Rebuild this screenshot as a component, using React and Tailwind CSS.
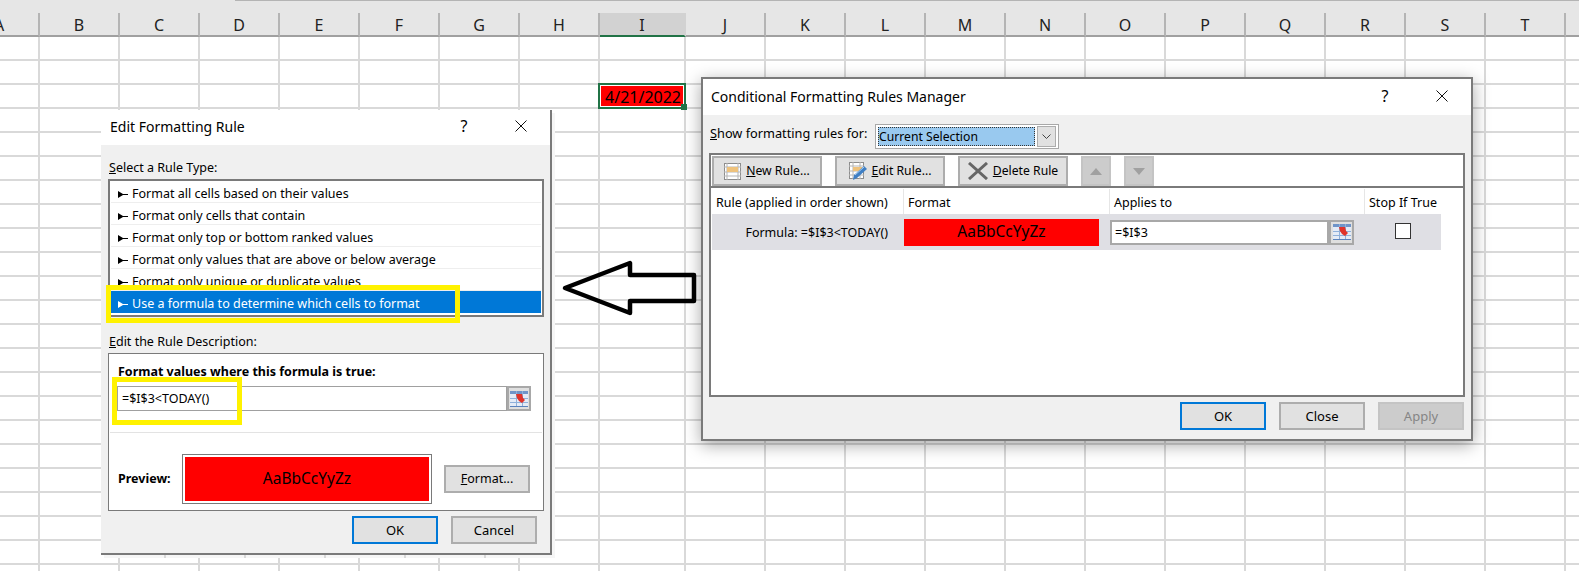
import React from 'react';

const font = { fontFamily: '"Noto Sans", sans-serif' };

const columns = [
    { name: 'A', w: 'w-[40px]', clip: true },
    { name: 'B', w: 'w-[80px]' }, { name: 'C', w: 'w-[80px]' }, { name: 'D', w: 'w-[80px]' },
    { name: 'E', w: 'w-[80px]' }, { name: 'F', w: 'w-[80px]' }, { name: 'G', w: 'w-[80px]' },
    { name: 'H', w: 'w-[80px]' }, { name: 'I', w: 'w-[86px]', active: true },
    { name: 'J', w: 'w-[80px]' }, { name: 'K', w: 'w-[80px]' }, { name: 'L', w: 'w-[80px]' },
    { name: 'M', w: 'w-[80px]' }, { name: 'N', w: 'w-[80px]' }, { name: 'O', w: 'w-[80px]' },
    { name: 'P', w: 'w-[80px]' }, { name: 'Q', w: 'w-[80px]' }, { name: 'R', w: 'w-[80px]' },
    { name: 'S', w: 'w-[80px]' }, { name: 'T', w: 'w-[80px]' }, { name: '', w: 'w-[80px]' },
];

const ruleTypes = [
    'Format all cells based on their values',
    'Format only cells that contain',
    'Format only top or bottom ranked values',
    'Format only values that are above or below average',
    'Format only unique or duplicate values',
];

const buttonTones = {
    normal: 'bg-[#e1e1e1] border-[#adadad] text-black',
    focused: 'bg-[#e1e1e1] border-[#0078d7] text-black',
    disabled: 'bg-[#cccccc] border-[#c4c4c4] text-[#858585]',
};

const RowArrow = ({ color = '#000' }) => (
    <svg width="10" height="7" viewBox="0 0 10 7" className="mr-[4px] shrink-0">
        <path d="M0 0L5 3H10V4H5L0 7Z" fill={color} />
    </svg>
);

const CloseIcon = () => (
    <svg width="12" height="12" viewBox="0 0 12 12">
        <path d="M0.5 0.5L11.5 11.5M11.5 0.5L0.5 11.5" stroke="#111" strokeWidth="1" />
    </svg>
);

const RefIcon = () => (
    <svg width="18" height="16" viewBox="0 0 18 16">
        <rect x="0" y="0" width="18" height="16" fill="#e4ebf6" />
        <rect x="0" y="0" width="18" height="3" fill="#6f94c8" />
        <path d="M0 7.5H18M0 11.5H18M6.5 0V16M12.5 0V16" stroke="#8fb0da" strokeWidth="1" />
        <path d="M0 15.5H18" stroke="#5b83bd" strokeWidth="1" />
        <path d="M6 3H12L13 7L15 9L12 12L9 10L7 7Z" fill="#e0332a" />
    </svg>
);

const NewRuleIcon = () => (
    <svg width="17" height="17" viewBox="0 0 17 17">
        <rect x="0.5" y="0.5" width="16" height="16" fill="#fff" stroke="#8c8c8c" />
        <path d="M0 4H17M0 9H17M0 13H17M3 0V17M14 0V17" stroke="#b5b5b5" strokeWidth="1" fill="none" />
        <rect x="3" y="4" width="11" height="5" fill="#eec27c" />
    </svg>
);

const EditRuleIcon = () => (
    <svg width="18" height="18" viewBox="0 0 18 18">
        <rect x="0.5" y="0.5" width="14" height="16" fill="#fff" stroke="#8c8c8c" />
        <path d="M0 4H15M0 9H15M0 13H15M4 0V17M11 0V17" stroke="#b5b5b5" strokeWidth="1" fill="none" />
        <rect x="4" y="5" width="9" height="4" fill="#eec27c" />
        <path d="M15 4L18 7L8 16L4 18L5 13Z" fill="#3f7fc4" />
        <path d="M6 13L15 5" stroke="#a9cdf0" strokeWidth="1" />
    </svg>
);

const DeleteIcon = () => (
    <svg width="20" height="18" viewBox="0 0 20 18">
        <path d="M1 1L19 17M19 1L1 17" stroke="#666" strokeWidth="3" />
    </svg>
);

const Button = ({ children, tone = 'normal', className = '' }) => (
    <div className={`flex items-center justify-center h-[28px] w-[86px] pt-[1px] border-2 text-[13px] ${buttonTones[tone]} ${className}`}>
        {children}
    </div>
);

const ToolButton = ({ icon, children }) => (
    <div className="flex items-center justify-center gap-[5px] w-[110px] h-[30px] bg-[#e1e1e1] border-2 border-[#adadad] text-[12.2px] text-black">
        {icon}
        <span>{children}</span>
    </div>
);

const DisabledArrow = ({ d }) => (
    <div className="flex items-center justify-center w-[30px] h-[30px] bg-[#cccccc] border-2 border-[#c4c4c4]">
        <svg width="12" height="7" viewBox="0 0 12 7"><path d={d} fill="#a0a0a0" /></svg>
    </div>
);

const Sheet = () => (
    <div className="w-[1660px] -mr-[80px]">
        <div className="relative h-[37px] pt-[13px] bg-[#e6e6e6] flex">
            <div className="absolute top-0 left-[235px] right-0 h-[1px] bg-[#b4b4b4]" />
            {columns.map(c => (
                <div
                    key={c.name || 'blank'}
                    className={`${c.w} shrink-0 flex items-center justify-center pt-[2px] overflow-hidden text-[16px] text-[#222] border-r-2 border-b-2 ${c.active ? 'bg-[#d2d2d2] border-r-[#d2d2d2] border-b-[#217346]' : 'border-r-[#b4b4b4] border-b-[#a0a0a0]'}`}
                >
                    {c.clip ? <span className="block w-[80px] -ml-[40px] text-center shrink-0">{c.name}</span> : c.name}
                </div>
            ))}
        </div>
        {Array.from({ length: 23 }).map((_, r) => (
            <div key={r} className="flex h-[24px]">
                {columns.map(c => (
                    <div key={c.name || 'blank'} className={`${c.w} shrink-0 border-r-2 border-b-2 border-[#d9d9d9]`} />
                ))}
            </div>
        ))}
    </div>
);

const EditRuleDialog = () => (
    <div className="absolute left-[101px] top-[110px] w-[451px] h-[445px] flex flex-col bg-[#f0f0f0] border-r-2 border-b-2 border-[#7a7a7a] shadow-[3px_3px_0_#f6f6f6] text-[12.5px] text-black">
        <div className="h-[35px] shrink-0 bg-white flex items-center pl-[9px] pb-[3px]">
            <span className="text-[14px]">Edit Formatting Rule</span>
            <span className="ml-auto text-[16px] w-[12px] text-center">?</span>
            <span className="ml-[45px] mr-[23px] flex"><CloseIcon /></span>
        </div>
        <div className="flex-1 pl-[7px] pt-[14px] flex flex-col">
            <div className="h-[18px] pl-[1px] leading-[18px]"><u>S</u>elect a Rule Type:</div>
            <div className="mt-[2px] w-[436px] h-[138px] border-2 border-[#7a7a7a] bg-white px-[1px] flex flex-col">
                {ruleTypes.map(t => (
                    <div key={t} className="h-[22px] shrink-0 pl-[7px] pt-[6px] flex items-center border-b border-[#eeeeee]">
                        <RowArrow />
                        <span>{t}</span>
                    </div>
                ))}
                <div className="h-[22px] shrink-0 pl-[7px] pt-[4px] flex items-center bg-[#0078d7] text-white">
                    <RowArrow color="#fff" />
                    <span>Use a formula to determine which cells to format</span>
                </div>
            </div>
            <div className="mt-[16px] h-[18px] pl-[1px] leading-[18px]"><u>E</u>dit the Rule Description:</div>
            <div className="mt-[2px] w-[436px] h-[158px] border border-[#7a7a7a] bg-white flex flex-col px-[9px]">
                <div className="font-bold h-[32px] pt-[8px] leading-[20px]">Format values where this formula is true:</div>
                <div className="flex h-[25px] -ml-[1px]">
                    <div className="w-[390px] border border-[#a0a0a0] flex items-center pl-[4px] pt-[1px]">=$I$3&lt;TODAY()</div>
                    <div className="w-[24px] bg-[#dfdfdf] border-2 border-[#a8a8a8] flex items-center justify-center"><RefIcon /></div>
                </div>
                <div className="mt-[21px] -mx-[8px] h-[1px] bg-[#e3e3e3]" />
                <div className="mt-[21px] flex items-center h-[50px]">
                    <span className="font-bold w-[64px]">Preview:</span>
                    <div className="w-[250px] h-[50px] border border-[#7a7a7a] p-[2px] bg-white">
                        <div className="h-full bg-[#ff0000] flex items-center justify-center text-[15.5px]">AaBbCcYyZz</div>
                    </div>
                    <Button className="ml-[12px]"><span className="text-[12.5px]"><u>F</u>ormat...</span></Button>
                </div>
            </div>
            <div className="mt-[5px] ml-[244px] flex gap-[13px]">
                <Button tone="focused">OK</Button>
                <Button>Cancel</Button>
            </div>
        </div>
        <div className="absolute left-[5px] top-[175px] w-[354px] h-[38px] border-[5px] border-[#fff200]" />
        <div className="absolute left-[11px] top-[267px] w-[130px] h-[48px] border-[5px] border-[#fff200]" />
        <div className="absolute left-0 top-[445px] h-[3px] pl-[63px] flex gap-[78px]">
            {[0, 1, 2, 3, 4].map(i => <div key={i} className="w-[2px] bg-[#d9d9d9]" />)}
        </div>
    </div>
);

const RulesManagerDialog = () => (
    <div className="absolute left-[701px] top-[77px] w-[772px] h-[364px] flex flex-col bg-[#f0f0f0] border-2 border-[#7a7a7a] shadow-[0_4px_16px_rgba(0,0,0,0.35)] text-[12.5px] text-black">
        <div className="h-[36px] shrink-0 bg-white flex items-center pl-[8px] pb-[2px]">
            <span className="text-[14px]">Conditional Formatting Rules Manager</span>
            <span className="ml-auto text-[16px] w-[12px] text-center">?</span>
            <span className="ml-[45px] mr-[23px] flex"><CloseIcon /></span>
        </div>
        <div className="flex-1 pl-[6px] pt-[9px] flex flex-col">
            <div className="flex items-center h-[25px]">
                <span className="w-[166px] pl-[1px] -mt-[5px] text-[12.75px]"><u>S</u>how formatting rules for:</span>
                <div className="w-[184px] h-[25px] border border-[#a8a8a8] bg-white p-[2px] flex gap-[2px]">
                    <div className="w-[157px] bg-[#99c9ef] border border-dotted border-[#333] flex items-center pt-[2px] text-[12.2px]">Current Selection</div>
                    <div className="flex-1 -my-[1px] bg-[#e1e1e1] border border-[#adadad] flex items-center justify-center">
                        <svg width="9" height="5" viewBox="0 0 9 5"><path d="M0.5 0.5L4.5 4.5L8.5 0.5" fill="none" stroke="#444" /></svg>
                    </div>
                </div>
            </div>
            <div className="mt-[4px] w-[756px] h-[244px] border-2 border-[#7a7a7a] bg-white flex flex-col">
                <div className="h-[33px] shrink-0 pt-[1px] pl-[1px] flex gap-[13px] border-b-2 border-[#7a7a7a]">
                    <ToolButton icon={<NewRuleIcon />}><u>N</u>ew Rule...</ToolButton>
                    <ToolButton icon={<EditRuleIcon />}><u>E</u>dit Rule...</ToolButton>
                    <ToolButton icon={<DeleteIcon />}><u>D</u>elete Rule</ToolButton>
                    <DisabledArrow d="M6 0L12 7H0Z" />
                    <DisabledArrow d="M0 0H12L6 7Z" />
                </div>
                <div className="flex h-[25px] shrink-0 pl-[1px] items-center mt-[1px]">
                    <div className="w-[192px] pl-[4px] pt-[3px] h-full flex items-center border-r border-[#e6e6e6]">Rule (applied in order shown)</div>
                    <div className="w-[206px] pl-[4px] pt-[3px] h-full flex items-center border-r border-[#e6e6e6]">Format</div>
                    <div className="w-[255px] pl-[4px] pt-[3px] h-full flex items-center border-r border-[#e6e6e6]">Applies to</div>
                    <div className="w-[76px] pl-[4px] pt-[3px] h-full flex items-center">Stop If True</div>
                </div>
                <div className="ml-[1px] w-[729px] h-[36px] bg-[#dfdfe4] flex items-center">
                    <div className="w-[176px] text-right mr-[16px] pt-[3px]">Formula: =$I$3&lt;TODAY()</div>
                    <div className="w-[195px] h-[27px] bg-[#ff0000] flex items-center justify-center text-[15.5px]">AaBbCcYyZz</div>
                    <div className="ml-[11px] w-[219px] h-[25px] bg-white border-2 border-[#a8a8a8] flex items-center pl-[3px] pt-[2px]">=$I$3</div>
                    <div className="w-[25px] h-[25px] bg-[#dfdfdf] border-2 border-[#a8a8a8] flex items-center justify-center"><RefIcon /></div>
                    <div className="ml-[41px] -mt-[2px] w-[16px] h-[16px] bg-white border-[1.5px] border-[#333]" />
                </div>
            </div>
            <div className="mt-[5px] ml-[471px] flex gap-[13px]">
                <Button tone="focused">OK</Button>
                <Button>Close</Button>
                <Button tone="disabled">Apply</Button>
            </div>
        </div>
    </div>
);

export default function App() {
    return (
        <div className="relative w-[1579px] h-[571px] overflow-hidden bg-white" style={font}>
            <Sheet />

            {/* selected cell I3 */}
            <div className="absolute left-[598px] top-[83px] w-[88px] h-[26px] border-2 border-[#217346] bg-white p-px">
                <div className="h-full bg-[#ff0000] flex items-center justify-end pr-[2px] pt-[1px] text-[16px] text-black">4/21/2022</div>
                <div className="absolute -right-[3px] -bottom-[3px] w-[6px] h-[6px] bg-[#217346]" />
            </div>

            <EditRuleDialog />

            {/* hand-drawn arrow between the dialogs */}
            <svg className="absolute left-[560px] top-[258px]" width="140" height="60" viewBox="0 0 140 60">
                <path d="M5 30L70 5V17H134V43H70V55Z" fill="none" stroke="#000" strokeWidth="4.5" strokeLinejoin="round" />
            </svg>

            <RulesManagerDialog />
        </div>
    );
}
